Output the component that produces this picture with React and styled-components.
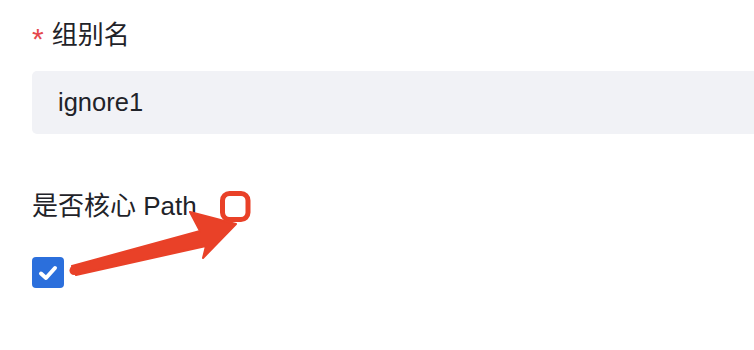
import React from 'react'
import styled, { createGlobalStyle } from 'styled-components'

const Global = createGlobalStyle`
html, body {
  margin:0;
  padding:0;
  background:#fff;
  overflow:hidden;
}
body {
  font-family:"Liberation Sans", "Noto Sans CJK SC", sans-serif;
  color:#1f2329;
}
`;

const Page = styled.div`
position:relative;
width:754px;
height:350px;
padding:17px 0 0 32px;
box-sizing:border-box;
overflow:hidden;
`;

const Label = styled.div`
display:flex;
align-items:center;
height:36px;
font-size:26px;
line-height:36px;
margin-top:${p => p.$top || 0}px;
`;

const Star = styled.span`
color:#e5484d;
font-size:30px;
margin-right:8px;
position:relative;
top:4px;
`;

const Input = styled.div`
margin-top:18px;
width:760px;
height:63px;
box-sizing:border-box;
background:#f1f2f6;
border-radius:5px;
padding-left:26px;
display:flex;
align-items:center;
font-size:25.5px;
color:#1f2329;
`;

const Check = styled.div`
margin-top:33px;
width:32px;
height:31px;
border-radius:4px;
background:#2b6fdc;
display:flex;
align-items:center;
justify-content:center;
`;

const Marks = styled.svg`
position:absolute;
left:0;
top:0;
pointer-events:none;
`;

const App = () => {
  return (
    <>
      <Global />
      <Page>
        <Label><Star>*</Star>组别名</Label>
        <Input>ignore1</Input>
        <Label $top={54}>是否核心 Path</Label>
        <Check>
          <svg width="22" height="18" viewBox="0 0 22 18">
            <polyline points="4,9.5 9,14 18,4" fill="none" stroke="#fff" strokeWidth="4" strokeLinecap="round" strokeLinejoin="round" />
          </svg>
        </Check>
        <Marks width="754" height="350">
          <rect x="222.5" y="193.5" width="25.5" height="26" rx="7" fill="none" stroke="#e94128" strokeWidth="5" />
          <polygon points="72,266 200,231 190,212 236,224 203,258 206,246 76,275" fill="#e94128" stroke="#e94128" strokeWidth="2" strokeLinejoin="round" />
          <circle cx="74" cy="270.5" r="4.5" fill="#e94128" />
        </Marks>
      </Page>
    </>
  )
}

export default App
